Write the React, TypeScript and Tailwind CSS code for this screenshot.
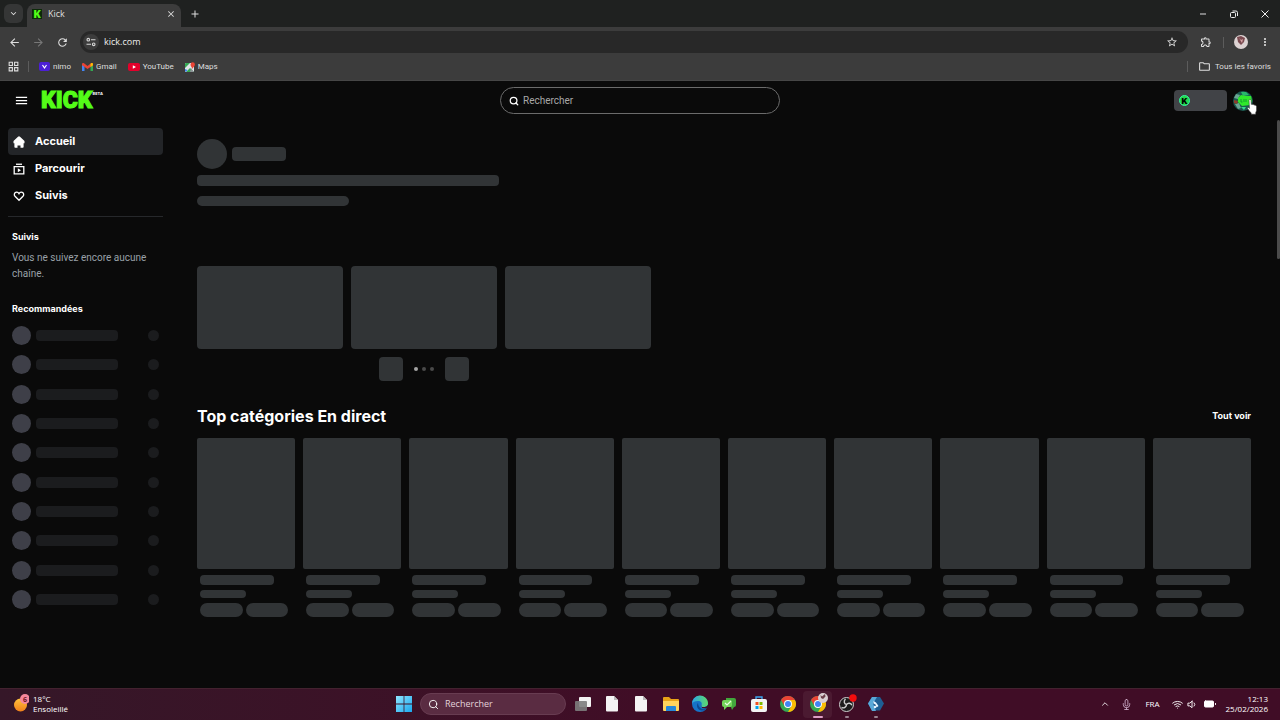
import React, { useState } from "react";
import {
  MdAdd,
  MdArrowBack,
  MdArrowForward,
  MdClose,
  MdExpandMore,
  MdMenu,
  MdMoreVert,
  MdOutlineExtension,
  MdOutlineFolder,
  MdOutlineGridView,
  MdRefresh,
  MdStarBorder,
} from "react-icons/md";
import { FiBattery, FiChevronUp, FiMic, FiSearch, FiVolume1, FiWifi } from "react-icons/fi";

const bookmarks = [
  { name: "nimo", icon: <NimoIcon /> },
  { name: "Gmail", icon: <GmailIcon /> },
  { name: "YouTube", icon: <YoutubeIcon /> },
  { name: "Maps", icon: <MapsIcon /> },
];

const navItems = [
  { name: "Accueil", icon: <HomeIcon />, active: true },
  { name: "Parcourir", icon: <BrowseIcon />, active: false },
  { name: "Suivis", icon: <HeartIcon />, active: false },
];

const taskbarApps = [
  { name: "Vue des tâches", icon: <TaskViewIcon />, running: false, active: false },
  { name: "Document", icon: <FileIcon />, running: false, active: false },
  { name: "Document 2", icon: <FileIcon />, running: false, active: false },
  { name: "Explorateur", icon: <ExplorerIcon />, running: false, active: false },
  { name: "Edge", icon: <EdgeIcon />, running: false, active: false },
  { name: "Messages", icon: <ChatIcon />, running: false, active: false },
  { name: "Store", icon: <StoreIcon />, running: false, active: false },
  { name: "Chrome", icon: <ChromeIcon />, running: false, active: false },
  { name: "Chrome profil", icon: <ChromeIcon badge />, running: true, active: true },
  { name: "OBS", icon: <ObsIcon />, running: true, active: false },
  { name: "Outil", icon: <HexIcon />, running: true, active: false },
];

const recommended = Array.from({ length: 10 }, (_, i) => i);
const categories = Array.from({ length: 10 }, (_, i) => i);

function NimoIcon() {
  return (
    <svg width="11" height="9" viewBox="0 0 11 9">
      <rect width="11" height="9" rx="2" fill="#4c1fd6" />
      <path d="M3.5 3l2 3 2-3" fill="none" stroke="#fff" strokeWidth="1.2" />
    </svg>
  );
}

function GmailIcon() {
  return (
    <svg width="11" height="8" viewBox="0 0 11 8">
      <path d="M0 1.500V8h2.500V3.500z" fill="#4285f4" />
      <path d="M11 1.500V8H8.500V3.500z" fill="#34a853" />
      <path d="M0 1.200C0 0 1.200-.3 2 .3l3.500 2.700L9 .3c.8-.6 2-.3 2 .9v1L5.500 6 0 2.200z" fill="#ea4335" />
      <path d="M8.500.7L9 .3c.8-.6 2-.3 2 .9v1L8.500 4z" fill="#fbbc04" />
    </svg>
  );
}

function YoutubeIcon() {
  return (
    <svg width="12" height="8" viewBox="0 0 12 8">
      <rect width="12" height="8" rx="2" fill="#e3002b" />
      <path d="M4.800 2.200L8 4 4.800 5.800z" fill="#fff" />
    </svg>
  );
}

function MapsIcon() {
  return (
    <svg width="10" height="10" viewBox="0 0 10 10">
      <rect y="1" width="9" height="9" rx="1" fill="#dfe3e6" />
      <path d="M0 2a1 1 0 011-1h4L0 6z" fill="#34a853" />
      <path d="M1 10l4-4 4 4z" fill="#34a853" />
      <path d="M0 7l2.500 1L1 10 0 9z" fill="#4285f4" />
      <path d="M5 10h4L6 6z" fill="#8c9196" />
      <path d="M7.500 7C7 5 5.500 4.200 5.500 2.400a2.200 2.200 0 014.400 0C9.900 4.200 8 5 7.500 7z" fill="#ea4335" />
    </svg>
  );
}

function TuneIcon() {
  return (
    <svg width="10" height="10" viewBox="0 0 10 10" fill="none" stroke="#d5d5d5" strokeWidth="1.100">
      <circle cx="2.300" cy="2.700" r="1.300" />
      <path d="M5 2.700h4.500M.5 7.300H5" />
      <circle cx="7.700" cy="7.300" r="1.300" />
    </svg>
  );
}

function HomeIcon() {
  return (
    <svg width="12" height="12" viewBox="0 0 12 12" fill="#fff">
      <path d="M5 .8a1.500 1.500 0 012 0L11.500 5v2.300h-.9V11a.8.8 0 01-.8.800H7.500V9.500h-3v2.300H2.200a.8.8 0 01-.8-.8V7.300H.5V5z" />
    </svg>
  );
}

function BrowseIcon() {
  return (
    <svg width="12" height="12" viewBox="0 0 12 12">
      <path d="M3 .6h6v1.300H3z" fill="#fff" />
      <path d="M1.200 3.600h9.600v7.200H1.200z" fill="none" stroke="#fff" strokeWidth="1.300" />
      <path d="M4.800 5.200L8 7.200 4.800 9.200z" fill="#fff" />
    </svg>
  );
}

function HeartIcon() {
  return (
    <svg width="12" height="12" viewBox="0 0 12 12" fill="none" stroke="#fff" strokeWidth="1.300">
      <path d="M6 10.300L2 6.200C.8 4.900 1.200 3 2.700 2.400 4 1.900 5.300 2.400 6 3.600c.7-1.200 2-1.700 3.300-1.200C10.800 3 11.200 4.900 10 6.200z" />
    </svg>
  );
}

function AvatarIcon() {
  return (
    <svg width="20" height="20" viewBox="0 0 20 20">
      <circle cx="10" cy="10" r="10" fill="#1b5a50" />
      <path d="M3 3l4 1-2 4-4-1zM2 13l4-1 2 5-3 1z" fill="#6ba593" />
      <path d="M1 9l4 1-1 3-3-1z" fill="#8c3d2c" />
      <path d="M8 1l5 0 3 3-6 1z" fill="#28b86b" />
      <path d="M5 7l3-3 5 1 5 0 1 5-2 4-8 1-4-4z" fill="#2fe82b" />
      <path d="M8 8v3h1.500M11 8v3M13 8v3" stroke="#129e2e" strokeWidth="1" fill="none" />
      <path d="M8 16h5l-2 3z" fill="#39d98c" />
    </svg>
  );
}

function HandCursor() {
  return (
    <svg width="11" height="16" viewBox="0 0 11 16">
      <path
        d="M2 1.300c0-1.200 1.900-1.200 2 0l.3 4.200c.5-.5 1.400-.3 1.700.3.600-.4 1.400-.1 1.700.5.900-.3 1.800.3 1.800 1.300v3.600c0 1-.6 1.500-.8 2.600v1.400H4.200v-1.200C3 12.800 1.700 11.300.6 9.500.2 8.600 1.200 8 2 8.800l.5.6z"
        fill="#fff"
        stroke="#333"
        strokeWidth=".5"
      />
    </svg>
  );
}

function WindowsIcon() {
  return (
    <svg width="16" height="16" viewBox="0 0 16 16">
      <defs>
        <linearGradient id="win" x1="0" y1="0" x2="1" y2="1">
          <stop offset="0" stopColor="#8fe6ff" />
          <stop offset="1" stopColor="#1aa7ee" />
        </linearGradient>
      </defs>
      <path d="M0 0h7.600v7.600H0zM8.400 0H16v7.600H8.400zM0 8.400h7.600V16H0zM8.400 8.400H16V16H8.400z" fill="url(#win)" />
    </svg>
  );
}

function TaskViewIcon() {
  return (
    <svg width="18" height="16" viewBox="0 0 18 16">
      <rect x="5" y="1" width="12" height="10" rx="1" fill="#f2f2f2" />
      <rect x="1" y="5" width="12" height="10" rx="1" fill="#7d7d7d" opacity=".9" />
    </svg>
  );
}

function FileIcon() {
  return (
    <svg width="12" height="16" viewBox="0 0 12 16">
      <path d="M1 0h7l4 4v10.500a1 1 0 01-1 1H1a1 1 0 01-1-1V1a1 1 0 011-1z" fill="#f4f4f4" />
      <path d="M8 0l4 4H8z" fill="#b9b9b9" />
    </svg>
  );
}

function ExplorerIcon() {
  return (
    <svg width="18" height="16" viewBox="0 0 18 16">
      <path d="M1 2a1 1 0 011-1h5l2 2h7a1 1 0 011 1v10H1z" fill="#e8a317" />
      <path d="M1 5h16v9a1 1 0 01-1 1H2a1 1 0 01-1-1z" fill="#ffd45c" />
      <path d="M4 11a1 1 0 011-1h8a1 1 0 011 1v4H4z" fill="#2487d8" />
    </svg>
  );
}

function EdgeIcon() {
  return (
    <svg width="18" height="18" viewBox="0 0 18 18">
      <defs>
        <linearGradient id="edge" x1="0" y1="0" x2="1" y2="0">
          <stop offset="0" stopColor="#2aa7e8" />
          <stop offset="1" stopColor="#5fd96a" />
        </linearGradient>
      </defs>
      <circle cx="9" cy="9" r="8" fill="#1673c8" />
      <path d="M1 9a8 8 0 0116-1c0 3-2 4-4.500 4-2 0-2.500-1-2-1.800C11.500 8 10 6 7 6 4 6 1.500 7 1 9z" fill="url(#edge)" />
      <path d="M10.500 10.200c-.5.800 0 1.800 2 1.800 2 0 3.600-.6 4.200-2l1.300 2-3 1.500-4-.5z" fill="#430d28" />
      <path d="M7 8c-2 2-1 6.500 3 7.500 2 .4 4-.3 5.500-1.800-4 1.500-8-.7-8.500-5.700z" fill="#0c4a94" />
    </svg>
  );
}

function ChatIcon() {
  return (
    <svg width="16" height="14" viewBox="0 0 16 14">
      <path d="M5 1h8a2 2 0 012 2v5a2 2 0 01-2 2l-2 3-1-3H5z" fill="#42a63c" />
      <path d="M3 3h6a2 2 0 012 2v3a2 2 0 01-2 2H6l-3 3v-3a2 2 0 01-2-2V5a2 2 0 012-2z" fill="#74d65a" />
      <path d="M4 6l2 2 4-4" stroke="#e9ffe2" strokeWidth="1.200" fill="none" />
    </svg>
  );
}

function StoreIcon() {
  return (
    <svg width="18" height="18" viewBox="0 0 18 18">
      <path d="M6 4V2h6v2" fill="none" stroke="#3ba7f0" strokeWidth="1.400" />
      <rect x="1" y="4" width="16" height="13" rx="2" fill="#f3f3f3" />
      <path d="M5.500 7h3v3h-3z" fill="#f25022" />
      <path d="M9.500 7h3v3h-3z" fill="#7fba00" />
      <path d="M5.500 11h3v3h-3z" fill="#00a4ef" />
      <path d="M9.500 11h3v3h-3z" fill="#ffb900" />
    </svg>
  );
}

function ChromeIcon({ badge = false }: { badge?: boolean }) {
  return (
    <svg width="18" height="18" viewBox="0 0 18 18" overflow="visible">
      <circle cx="9" cy="9" r="8" fill="#34a853" />
      <path d="M2.070 5A8 8 0 0115.930 5L9 5a4 4 0 00-3.460 6z" fill="#ea4335" />
      <path d="M15.930 5A8 8 0 019 17l3.460-6A4 4 0 009 5z" fill="#fbbc04" />
      <circle cx="9" cy="9" r="4" fill="#fff" />
      <circle cx="9" cy="9" r="3" fill="#4285f4" />
      {badge && (
        <>
          <circle cx="14" cy="3" r="5" fill="#d9cfd2" />
          <path d="M11.500 0l1.500 1.500 3-2.500.500 2.500L14 4l-2-1z" fill="#6b3f49" />
        </>
      )}
    </svg>
  );
}

function ObsIcon() {
  return (
    <svg width="18" height="18" viewBox="0 0 18 18" overflow="visible">
      <circle cx="8.500" cy="9.500" r="7" fill="#1d1d1d" stroke="#cfcfcf" strokeWidth="1" />
      <path d="M8.500 9.500C6 9 5.500 6 7.500 4M8.500 9.500c1.500-2 4.500-1.500 5.500.8M8.500 9.500c0 2.500-2.500 4-5 3" fill="none" stroke="#cfcfcf" strokeWidth="1.400" />
      <circle cx="15" cy="3" r="3.700" fill="#f30d0d" />
    </svg>
  );
}

function HexIcon() {
  return (
    <svg width="18" height="18" viewBox="0 0 18 18">
      <path d="M5 2h8l4 6.500-4 7H5l-4-7z" fill="#1e5f94" />
      <path d="M5 2l5 0-4 6.500L9 16H5L1 8.500z" fill="#59a9d8" />
      <path d="M6.500 6l2.500 1.500 2.500 3.500-2 1.500-1-3-2-1z" fill="#eaf6ff" />
      <circle cx="8" cy="12" r="1.200" fill="#eaf6ff" />
    </svg>
  );
}

function KickMark() {
  return (
    <span className="flex h-[10px] w-[10px] items-center justify-center bg-[#0c2a08] text-[11px] leading-none font-black text-[#53fc18]">
      K
    </span>
  );
}

const BrowserChrome = () => (
  <header className="bg-[#3c3c3c] font-['Open_Sans','Noto_Sans',sans-serif] text-[#dedede]">
    <div className="flex h-[27px] items-center bg-[#1f2120] pl-1">
      <button aria-label="Rechercher dans les onglets" className="flex h-[19px] w-[19px] items-center justify-center rounded-md bg-[#353636]">
        <MdExpandMore size={11} />
      </button>
      <div className="ml-1 flex h-[23px] w-[154px] items-center self-end rounded-t-lg bg-[#3c3c3c] px-[5px] pb-1">
        <KickMark />
        <span className="ml-[6px] flex-1 text-[9px]">Kick</span>
        <button aria-label="Fermer l'onglet">
          <MdClose size={10} />
        </button>
      </div>
      <button aria-label="Nouvel onglet" className="ml-2">
        <MdAdd size={12} />
      </button>
      <div className="ml-auto flex items-center">
        <button aria-label="Réduire" className="flex w-[31px] justify-center">
          <svg width="8" height="8" viewBox="0 0 8 8">
            <path d="M1 4h6" stroke="#dedede" />
          </svg>
        </button>
        <button aria-label="Restaurer" className="flex w-[31px] justify-center">
          <svg width="8" height="8" viewBox="0 0 8 8" fill="none" stroke="#eee">
            <rect x=".5" y="2.500" width="5" height="5" rx="1" />
            <path d="M2.500 1h3.500a1.500 1.500 0 011.500 1.500V6" />
          </svg>
        </button>
        <button aria-label="Fermer" className="flex w-[31px] items-center justify-center">
          <svg width="8" height="8" viewBox="0 0 8 8">
            <path d="M.5.5l7 7M7.500.5l-7 7" stroke="#eee" />
          </svg>
        </button>
      </div>
    </div>

    <div className="flex h-[30px] items-center pr-[9px] pl-2">
      <div className="flex w-[72px] items-center gap-[11px]">
        <button aria-label="Retour">
          <MdArrowBack size={13} />
        </button>
        <button aria-label="Avancer" className="text-[#777777]">
          <MdArrowForward size={13} />
        </button>
        <button aria-label="Actualiser">
          <MdRefresh size={13} />
        </button>
      </div>
      <div className="flex h-[22px] flex-1 items-center rounded-full bg-[#282828] pr-[10px] pl-[3px]">
        <span className="flex h-4 w-4 items-center justify-center rounded-full bg-[#3c3c3c]">
          <TuneIcon />
        </span>
        <input
          aria-label="Adresse"
          defaultValue="kick.com"
          className="ml-[5px] min-w-0 flex-1 bg-transparent text-[9px] text-[#ececec] outline-none"
        />
        <button aria-label="Ajouter aux favoris">
          <MdStarBorder size={12} />
        </button>
      </div>
      <div className="ml-3 flex items-center">
        <button aria-label="Extensions">
          <MdOutlineExtension size={12} />
        </button>
        <span className="ml-[11px] h-[11px] w-px bg-[#5c5c5c]" />
        <button aria-label="Profil" className="ml-[10px]">
          <svg width="14" height="14" viewBox="0 0 14 14">
            <circle cx="7" cy="7" r="7" fill="#ddd3d3" />
            <path d="M3 2l4-1 4 2-1 4-3 3-3-3z" fill="#7a4a50" />
            <path d="M5 3l2 2 2-1-1 4z" fill="#d8a3a5" />
          </svg>
        </button>
        <button aria-label="Menu" className="ml-[11px]">
          <MdMoreVert size={12} />
        </button>
      </div>
    </div>

    <div className="flex h-6 items-center border-b border-[#464646] pr-[9px] pb-1 pl-[7px] font-['Roboto',sans-serif] text-[8px]">
      <button aria-label="Groupes d'onglets">
        <MdOutlineGridView size={13} />
      </button>
      <span className="ml-[8px] h-[11px] w-px bg-[#5c5c5c]" />
      <nav className="ml-[10px] flex items-center gap-[11px]">
        {bookmarks.map((bookmark) => (
          <a key={bookmark.name} href="#" className="flex items-center gap-[3px]">
            {bookmark.icon}
            {bookmark.name}
          </a>
        ))}
      </nav>
      <span className="ml-auto h-[11px] w-px bg-[#5c5c5c]" />
      <button className="ml-[10px] flex items-center gap-1">
        <MdOutlineFolder size={13} />
        Tous les favoris
      </button>
    </div>
  </header>
);

const SiteHeader = () => {
  const [query, setQuery] = useState("");

  return (
    <div className="grid h-[39px] grid-cols-[1fr_280px_1fr] items-center">
      <div className="flex items-center pl-[14px]">
        <button aria-label="Menu" className="text-white">
          <MdMenu size={15} />
        </button>
        <a href="#" className="ml-3 flex items-start text-[#53fc18]">
          <span className="font-['Roboto',sans-serif] text-[23px] leading-5 font-black [-webkit-text-stroke:1px_#53fc18]">
            KICK
          </span>
          <span className="text-[4px] leading-[5px] font-bold text-white">BETA</span>
        </a>
      </div>
      <label className="flex h-[27px] items-center gap-1 rounded-full border border-[#6b6b6b] px-2">
        <FiSearch size={10} className="text-white" strokeWidth={3} />
        <input
          type="text"
          aria-label="Rechercher"
          placeholder="Rechercher"
          className="min-w-0 flex-1 bg-transparent font-['Roboto',sans-serif] text-[10px] text-white outline-none placeholder:text-[#a8a8a8]"
          value={query}
          onChange={(e) => setQuery(e.target.value)}
        />
      </label>
      <div className="flex items-center justify-end gap-[6px] pr-[27px]">
        <button aria-label="Portefeuille" className="flex h-[21px] w-[53px] items-center rounded-sm bg-[#414347] pl-[5px]">
          <span className="flex h-[11px] w-[11px] items-center justify-center rounded-full border border-[#35f0a0] bg-[#22d94a] text-[8px] leading-none font-black text-black">
            K
          </span>
        </button>
        <button aria-label="Compte" className="relative">
          <AvatarIcon />
          <span className="absolute top-2 left-[14px]">
            <HandCursor />
          </span>
        </button>
      </div>
    </div>
  );
};

const Sidebar = () => (
  <aside className="w-[171px] shrink-0 pt-2 pr-2 pl-2">
    <nav>
      {navItems.map((item) => (
        <a
          key={item.name}
          href="#"
          className={`flex h-[27px] items-center gap-[10px] rounded-sm pl-[5px] text-[11px] font-bold text-white ${
            item.active ? "bg-[#232528]" : ""
          }`}
        >
          {item.icon}
          {item.name}
        </a>
      ))}
    </nav>
    <div className="mt-[7px] border-t border-[#26282b] px-1">
      <h2 className="mt-3 text-[9px] leading-4 font-bold text-white">Suivis</h2>
      <p className="mt-[5px] font-['Roboto',sans-serif] text-[10px] leading-4 text-[#99a1a8]">
        Vous ne suivez encore aucune chaîne.
      </p>
      <h2 className="mt-[19px] text-[9px] leading-4 font-bold text-white">Recommandées</h2>
      <ul className="mt-[9px] flex h-[283px] flex-col justify-between">
        {recommended.map((row) => (
          <li key={row} className="flex items-center">
            <span className="h-[19px] w-[19px] rounded-full bg-[#3e3f48]" />
            <span className="ml-[5px] h-[11px] w-[82px] rounded-sm bg-[#1b1c1e]" />
            <span className="ml-auto h-[11px] w-[11px] rounded-full bg-[#1b1c1e]" />
          </li>
        ))}
      </ul>
    </div>
  </aside>
);

const Main = () => (
  <main className="min-w-0 flex-1 px-[26px] pt-[19px] pb-6">
    <section>
      <div className="flex items-center gap-[5px]">
        <div className="h-[30px] w-[30px] rounded-full bg-[#313436]" />
        <div className="h-[14px] w-[54px] rounded bg-[#313436]" />
      </div>
      <div className="mt-[6px] h-[11px] w-[302px] rounded bg-[#313436]" />
      <div className="mt-[10px] h-[10px] w-[152px] rounded-full bg-[#313436]" />
      <div className="mt-[60px] w-[454px]">
        <div className="grid grid-cols-3 gap-2">
          <div className="h-[83px] rounded bg-[#313436]" />
          <div className="h-[83px] rounded bg-[#313436]" />
          <div className="h-[83px] rounded bg-[#313436]" />
        </div>
        <div className="mt-2 flex items-center justify-center gap-[11px]">
          <button aria-label="Précédent" className="h-6 w-6 rounded bg-[#313436]" />
          <div className="flex gap-1">
            <span className="h-1 w-1 rounded-full bg-[#a4a4a4]" />
            <span className="h-1 w-1 rounded-full bg-[#4a4a4a]" />
            <span className="h-1 w-1 rounded-full bg-[#4a4a4a]" />
          </div>
          <button aria-label="Suivant" className="h-6 w-6 rounded bg-[#313436]" />
        </div>
      </div>
    </section>

    <section className="mt-[23px]">
      <div className="flex items-center justify-between">
        <h1 className="text-base font-bold text-white">Top catégories En direct</h1>
        <a href="#" className="text-[9px] font-bold text-white">
          Tout voir
        </a>
      </div>
      <div className="mt-[10px] grid grid-cols-10 gap-2">
        {categories.map((card) => (
          <div key={card}>
            <div className="aspect-[3/4] rounded-xs bg-[#313436]" />
            <div className="px-[3px] pt-[6px]">
              <div className="h-[10px] w-4/5 rounded bg-[#313436]" />
              <div className="mt-[5px] h-2 w-1/2 rounded bg-[#313436]" />
              <div className="mt-[5px] flex gap-[3px] pr-1">
                <div className="h-[14px] flex-1 rounded-full bg-[#313436]" />
                <div className="h-[14px] flex-1 rounded-full bg-[#313436]" />
              </div>
            </div>
          </div>
        ))}
      </div>
    </section>
  </main>
);

const Taskbar = () => (
  <footer className="grid h-8 grid-cols-[1fr_auto_1fr] items-center border-t border-[#43222f] bg-linear-to-r from-[#351728] via-[#400d26] to-[#400d26] pb-px font-['Open_Sans','Noto_Sans',sans-serif] text-white">
    <button className="flex items-center gap-1 pl-3 text-left text-[8px] leading-[10px]">
      <svg width="17" height="20" viewBox="0 0 17 20">
        <defs>
          <linearGradient id="sun" x1="0" y1="0" x2="0" y2="1">
            <stop offset="0" stopColor="#ffc23d" />
            <stop offset="1" stopColor="#f0801a" />
          </linearGradient>
        </defs>
        <circle cx="8.500" cy="11" r="6.500" fill="url(#sun)" />
        <circle cx="13" cy="5" r="5" fill="#f5879c" />
        <text x="13" y="7.500" textAnchor="middle" fontSize="7" fontWeight="700" fill="#6d1423">
          6
        </text>
      </svg>
      <span>
        18°C
        <br />
        Ensoleillé
      </span>
    </button>

    <div className="flex items-center gap-[2px]">
      <button aria-label="Démarrer" className="flex w-[29px] justify-center">
        <WindowsIcon />
      </button>
      <label className="flex h-[22px] w-[146px] items-center gap-[6px] rounded-full border border-[#683c51] bg-[#5a2c42] px-[7px]">
        <FiSearch size={11} />
        <input
          type="text"
          aria-label="Recherche Windows"
          placeholder="Rechercher"
          className="min-w-0 flex-1 bg-transparent text-[9px] outline-none placeholder:text-[#e3d3da]"
        />
      </label>
      <div className="grid w-[323px] grid-cols-11">
        {taskbarApps.map((app) => (
          <button
            key={app.name}
            aria-label={app.name}
            className={`relative flex h-[27px] items-center justify-center rounded ${app.active ? "bg-[#4b1a31]" : ""}`}
          >
            {app.icon}
            {app.running && (
              <span
                className={`absolute bottom-0 h-[2px] rounded-full ${
                  app.active ? "w-[10px] bg-[#dd9fc4]" : "w-1 bg-[#9a8390]"
                }`}
              />
            )}
          </button>
        ))}
      </div>
    </div>

    <div className="flex items-center justify-end pr-3 text-[8px]">
      <FiChevronUp size={10} />
      <FiMic size={11} className="ml-[11px] text-[#c9a8c4]" />
      <span className="ml-[13px]">FRA</span>
      <FiWifi size={11} className="ml-3" />
      <FiVolume1 size={11} className="ml-1" />
      <FiBattery size={12} className="ml-[6px]" fill="currentColor" />
      <div className="ml-[10px] text-right leading-[10px]">
        12:13
        <br />
        25/02/2026
      </div>
    </div>
  </footer>
);

const App = () => {
  return (
    <div className="flex min-h-screen flex-col bg-[#0a0a0a] font-['Inter',sans-serif]">
      <BrowserChrome />
      <SiteHeader />
      <div className="flex flex-1">
        <Sidebar />
        <Main />
        <div className="h-[139px] w-[3px] rounded-full bg-[#4b4b4b]" />
      </div>
      <Taskbar />
    </div>
  );
};

export default App;
